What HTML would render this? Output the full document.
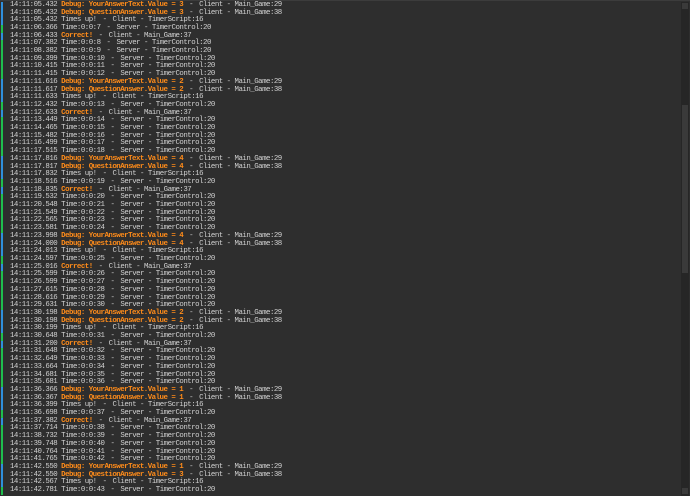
<!DOCTYPE html>
<html><head><meta charset="utf-8"><style>
html,body{margin:0;padding:0;width:690px;height:496px;overflow:hidden;background:#2e2e2e;}
#top{position:absolute;left:0;top:0;width:690px;height:1px;background:#3c3c3c;}
#log{position:absolute;left:0;top:1.8px;width:680px;font-family:"Liberation Mono",monospace;font-size:7.4px;letter-spacing:-0.5px;color:#d2d2d2;}
.l{position:relative;height:7.71px;line-height:7.71px;white-space:pre;padding-left:10px;}
.l::before{content:"";position:absolute;left:1px;top:0;width:2px;height:100%;background:#1fbf4e;}
.c::before{background:#2f8fdc;}
.o{color:#ff8c1a;font-weight:bold;}
i{font-style:normal;margin:0 6px 0 6px;}
.t{margin-left:1px;}
#sb{position:absolute;left:681px;top:2px;width:8px;height:494px;background:#262626;}
#th{position:absolute;left:682px;top:105px;width:6px;height:168px;background:#3a3a3a;}
.ar{position:absolute;left:682px;width:6px;height:6px;background:#3a3a3a;}
</style></head><body>
<div id="top"></div>
<div id="log">
<div class="l c">14:11:05.432 <span class="o">Debug: YourAnswerText.Value = 3</span><i>-</i>Client - Main_Game:29</div>
<div class="l c">14:11:05.432 <span class="o">Debug: QuestionAnswer.Value = 3</span><i>-</i>Client - Main_Game:38</div>
<div class="l c">14:11:05.432 Times up!<i>-</i>Client - TimerScript:16</div>
<div class="l">14:11:06.366 Time:0:0:7<i>-</i>Server - TimerControl:20</div>
<div class="l c">14:11:06.433 <span class="o">Correct!</span><i>-</i>Client - Main_Game:37</div>
<div class="l">14:11:07.382 Time:0:0:8<i>-</i>Server - TimerControl:20</div>
<div class="l">14:11:08.382 Time:0:0:9<i>-</i>Server - TimerControl:20</div>
<div class="l">14:11:09.399 Time:0:0:10<i>-</i>Server - TimerControl:20</div>
<div class="l">14:11:10.415 Time:0:0:11<i>-</i>Server - TimerControl:20</div>
<div class="l">14:11:11.415 Time:0:0:12<i>-</i>Server - TimerControl:20</div>
<div class="l c">14:11:11.616 <span class="o">Debug: YourAnswerText.Value = 2</span><i>-</i>Client - Main_Game:29</div>
<div class="l c">14:11:11.617 <span class="o">Debug: QuestionAnswer.Value = 2</span><i>-</i>Client - Main_Game:38</div>
<div class="l c">14:11:11.633 Times up!<i>-</i>Client - TimerScript:16</div>
<div class="l">14:11:12.432 Time:0:0:13<i>-</i>Server - TimerControl:20</div>
<div class="l c">14:11:12.633 <span class="o">Correct!</span><i>-</i>Client - Main_Game:37</div>
<div class="l">14:11:13.449 Time:0:0:14<i>-</i>Server - TimerControl:20</div>
<div class="l">14:11:14.465 Time:0:0:15<i>-</i>Server - TimerControl:20</div>
<div class="l">14:11:15.482 Time:0:0:16<i>-</i>Server - TimerControl:20</div>
<div class="l">14:11:16.499 Time:0:0:17<i>-</i>Server - TimerControl:20</div>
<div class="l">14:11:17.515 Time:0:0:18<i>-</i>Server - TimerControl:20</div>
<div class="l c">14:11:17.816 <span class="o">Debug: YourAnswerText.Value = 4</span><i>-</i>Client - Main_Game:29</div>
<div class="l c">14:11:17.817 <span class="o">Debug: QuestionAnswer.Value = 4</span><i>-</i>Client - Main_Game:38</div>
<div class="l c">14:11:17.832 Times up!<i>-</i>Client - TimerScript:16</div>
<div class="l">14:11:18.516 Time:0:0:19<i>-</i>Server - TimerControl:20</div>
<div class="l c">14:11:18.835 <span class="o">Correct!</span><i>-</i>Client - Main_Game:37</div>
<div class="l">14:11:19.532 Time:0:0:20<i>-</i>Server - TimerControl:20</div>
<div class="l">14:11:20.548 Time:0:0:21<i>-</i>Server - TimerControl:20</div>
<div class="l">14:11:21.549 Time:0:0:22<i>-</i>Server - TimerControl:20</div>
<div class="l">14:11:22.565 Time:0:0:23<i>-</i>Server - TimerControl:20</div>
<div class="l">14:11:23.581 Time:0:0:24<i>-</i>Server - TimerControl:20</div>
<div class="l c">14:11:23.998 <span class="o">Debug: YourAnswerText.Value = 4</span><i>-</i>Client - Main_Game:29</div>
<div class="l c">14:11:24.000 <span class="o">Debug: QuestionAnswer.Value = 4</span><i>-</i>Client - Main_Game:38</div>
<div class="l c">14:11:24.013 Times up!<i>-</i>Client - TimerScript:16</div>
<div class="l">14:11:24.597 Time:0:0:25<i>-</i>Server - TimerControl:20</div>
<div class="l c">14:11:25.016 <span class="o">Correct!</span><i>-</i>Client - Main_Game:37</div>
<div class="l">14:11:25.599 Time:0:0:26<i>-</i>Server - TimerControl:20</div>
<div class="l">14:11:26.599 Time:0:0:27<i>-</i>Server - TimerControl:20</div>
<div class="l">14:11:27.615 Time:0:0:28<i>-</i>Server - TimerControl:20</div>
<div class="l">14:11:28.616 Time:0:0:29<i>-</i>Server - TimerControl:20</div>
<div class="l">14:11:29.631 Time:0:0:30<i>-</i>Server - TimerControl:20</div>
<div class="l c">14:11:30.198 <span class="o">Debug: YourAnswerText.Value = 2</span><i>-</i>Client - Main_Game:29</div>
<div class="l c">14:11:30.198 <span class="o">Debug: QuestionAnswer.Value = 2</span><i>-</i>Client - Main_Game:38</div>
<div class="l c">14:11:30.199 Times up!<i>-</i>Client - TimerScript:16</div>
<div class="l">14:11:30.648 Time:0:0:31<i>-</i>Server - TimerControl:20</div>
<div class="l c">14:11:31.200 <span class="o">Correct!</span><i>-</i>Client - Main_Game:37</div>
<div class="l">14:11:31.648 Time:0:0:32<i>-</i>Server - TimerControl:20</div>
<div class="l">14:11:32.649 Time:0:0:33<i>-</i>Server - TimerControl:20</div>
<div class="l">14:11:33.664 Time:0:0:34<i>-</i>Server - TimerControl:20</div>
<div class="l">14:11:34.681 Time:0:0:35<i>-</i>Server - TimerControl:20</div>
<div class="l">14:11:35.681 Time:0:0:36<i>-</i>Server - TimerControl:20</div>
<div class="l c">14:11:36.366 <span class="o">Debug: YourAnswerText.Value = 1</span><i>-</i>Client - Main_Game:29</div>
<div class="l c">14:11:36.367 <span class="o">Debug: QuestionAnswer.Value = 1</span><i>-</i>Client - Main_Game:38</div>
<div class="l c">14:11:36.399 Times up!<i>-</i>Client - TimerScript:16</div>
<div class="l">14:11:36.698 Time:0:0:37<i>-</i>Server - TimerControl:20</div>
<div class="l c">14:11:37.382 <span class="o">Correct!</span><i>-</i>Client - Main_Game:37</div>
<div class="l">14:11:37.714 Time:0:0:38<i>-</i>Server - TimerControl:20</div>
<div class="l">14:11:38.732 Time:0:0:39<i>-</i>Server - TimerControl:20</div>
<div class="l">14:11:39.748 Time:0:0:40<i>-</i>Server - TimerControl:20</div>
<div class="l">14:11:40.764 Time:0:0:41<i>-</i>Server - TimerControl:20</div>
<div class="l">14:11:41.765 Time:0:0:42<i>-</i>Server - TimerControl:20</div>
<div class="l c">14:11:42.550 <span class="o">Debug: YourAnswerText.Value = 1</span><i>-</i>Client - Main_Game:29</div>
<div class="l c">14:11:42.550 <span class="o">Debug: QuestionAnswer.Value = 3</span><i>-</i>Client - Main_Game:38</div>
<div class="l c">14:11:42.567 Times up!<i>-</i>Client - TimerScript:16</div>
<div class="l">14:11:42.781 Time:0:0:43<i>-</i>Server - TimerControl:20</div>
</div>
<div id="sb"></div>
<div id="th"></div>
<div class="ar" style="top:3px"></div>
<div class="ar" style="top:488px"></div>
</body></html>
